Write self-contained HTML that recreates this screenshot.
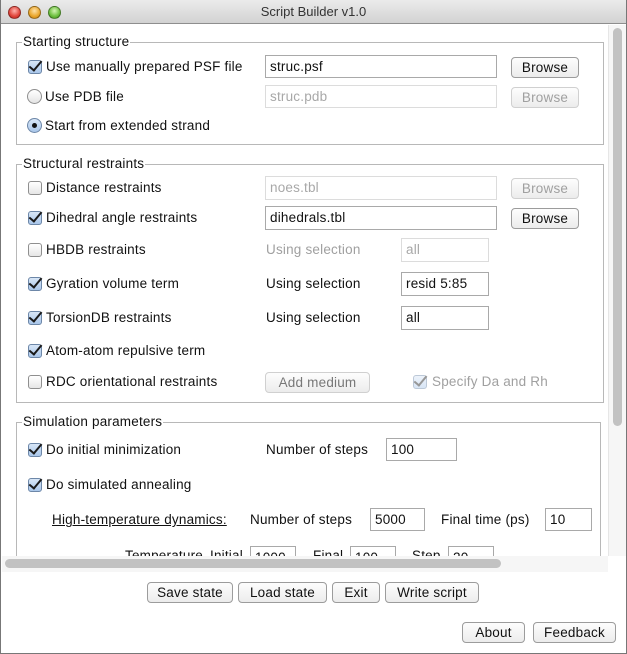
<!DOCTYPE html>
<html><head><meta charset="utf-8"><style>
*{box-sizing:border-box;margin:0;padding:0}
body{width:627px;height:654px;overflow:hidden;background:#fff;font-family:"Liberation Sans",sans-serif;font-size:13.5px;letter-spacing:.2px;color:#111;position:relative}
.a{position:absolute;white-space:nowrap}
.win{position:absolute;left:0;top:0;width:627px;height:654px;border:1px solid #777;border-top:none}
.title{position:absolute;left:0;top:0;width:627px;height:24px;background:linear-gradient(#ebebeb,#d2d2d2);border-bottom:1px solid #8e8e8e;text-align:center;line-height:24px;font-size:13px;letter-spacing:0;color:#333}
.dot{position:absolute;top:6px;width:13px;height:13px;border-radius:50%;border:1px solid rgba(0,0,0,.35)}
.grp{position:absolute;border:1px solid #b8b8b8}
.gt{position:absolute;background:#fff;padding:0 1px;line-height:14px}
.cb{position:absolute;width:14px;height:14px;border:1px solid #8f8f8f;border-radius:3px;background:linear-gradient(#fff,#e6e6e6)}
.cb.on{background:linear-gradient(#d8e6f7,#a9c6ea);border-color:#6d87a8}
.cb.on::after{content:"";position:absolute;left:3px;top:-3px;width:5px;height:11px;border-right:2.5px solid #1a1a1a;border-bottom:2.5px solid #1a1a1a;transform:rotate(40deg)}
.cb.dis{opacity:.45}
.rb{position:absolute;width:15px;height:15px;border:1px solid #8f8f8f;border-radius:50%;background:linear-gradient(#fff,#e4e4e4)}
.rb.on{background:linear-gradient(#d8e6f7,#a9c6ea);border-color:#6d87a8}
.rb.on::after{content:"";position:absolute;left:4px;top:4px;width:5px;height:5px;border-radius:50%;background:#111}
.in{position:absolute;border:1px solid #a9a9a9;background:#fff;padding-left:4px;line-height:21px}
.in.dis{border-color:#dcdcdc;color:#a8a8a8}
.bt{position:absolute;border:1px solid #9c9c9c;border-radius:4px;background:linear-gradient(#fdfdfd,#ececec);text-align:center;line-height:19px}
.bt.dis{border-color:#d0d0d0;color:#a0a0a0}
.g{color:#a0a0a0}
</style></head><body>
<div class="title">Script Builder v1.0</div>
<div class="dot" style="left:8px;background:radial-gradient(circle at 50% 35%,#ffb3ad,#e0443a 60%,#b7261d)"></div>
<div class="dot" style="left:28px;background:radial-gradient(circle at 50% 35%,#ffe1a6,#eaa62b 60%,#c27c10)"></div>
<div class="dot" style="left:48px;background:radial-gradient(circle at 50% 35%,#d4f5b4,#6cbf3e 60%,#3f8f1f)"></div>

<div class="grp" style="left:16px;top:42px;width:588px;height:103px"></div>
<div class="gt a" style="left:22px;top:35px">Starting structure</div>
<div class="cb on" style="left:28px;top:60px"></div><div class="a" style="left:46px;top:59px">Use manually prepared PSF file</div>
<div class="in" style="left:265px;top:55px;width:232px;height:23px">struc.psf</div>
<div class="bt" style="left:511px;top:57px;width:68px;height:21px">Browse</div>
<div class="rb" style="left:27px;top:89px"></div><div class="a" style="left:45px;top:89px">Use PDB file</div>
<div class="in dis" style="left:265px;top:85px;width:232px;height:23px">struc.pdb</div>
<div class="bt dis" style="left:511px;top:87px;width:68px;height:21px">Browse</div>
<div class="rb on" style="left:27px;top:118px"></div><div class="a" style="left:45px;top:118px">Start from extended strand</div>

<div class="grp" style="left:16px;top:164px;width:588px;height:239px"></div>
<div class="gt a" style="left:22px;top:157px">Structural restraints</div>
<div class="cb" style="left:28px;top:181px"></div><div class="a" style="left:46px;top:180px">Distance restraints</div>
<div class="in dis" style="left:265px;top:176px;width:232px;height:24px">noes.tbl</div>
<div class="bt dis" style="left:511px;top:178px;width:68px;height:21px">Browse</div>
<div class="cb on" style="left:28px;top:211px"></div><div class="a" style="left:46px;top:210px">Dihedral angle restraints</div>
<div class="in" style="left:265px;top:206px;width:232px;height:24px">dihedrals.tbl</div>
<div class="bt" style="left:511px;top:208px;width:68px;height:21px">Browse</div>
<div class="cb" style="left:28px;top:243px"></div><div class="a" style="left:46px;top:242px">HBDB restraints</div>
<div class="a g" style="left:266px;top:242px">Using selection</div>
<div class="in dis" style="left:401px;top:238px;width:88px;height:24px">all</div>
<div class="cb on" style="left:28px;top:277px"></div><div class="a" style="left:46px;top:276px">Gyration volume term</div>
<div class="a" style="left:266px;top:276px">Using selection</div>
<div class="in" style="left:401px;top:272px;width:88px;height:24px">resid 5:85</div>
<div class="cb on" style="left:28px;top:311px"></div><div class="a" style="left:46px;top:310px">TorsionDB restraints</div>
<div class="a" style="left:266px;top:310px">Using selection</div>
<div class="in" style="left:401px;top:306px;width:88px;height:24px">all</div>
<div class="cb on" style="left:28px;top:344px"></div><div class="a" style="left:46px;top:343px">Atom-atom repulsive term</div>
<div class="cb" style="left:28px;top:375px"></div><div class="a" style="left:46px;top:374px">RDC orientational restraints</div>
<div class="bt dis" style="left:265px;top:372px;width:105px;height:21px;color:#777">Add medium</div>
<div class="cb on dis" style="left:413px;top:375px"></div><div class="a g" style="left:432px;top:374px">Specify Da and Rh</div>

<div class="grp" style="left:16px;top:422px;width:585px;height:160px"></div>
<div class="gt a" style="left:22px;top:415px">Simulation parameters</div>
<div class="cb on" style="left:28px;top:443px"></div><div class="a" style="left:46px;top:442px">Do initial minimization</div>
<div class="a" style="left:266px;top:442px">Number of steps</div>
<div class="in" style="left:386px;top:438px;width:71px;height:23px">100</div>
<div class="cb on" style="left:28px;top:478px"></div><div class="a" style="left:46px;top:477px">Do simulated annealing</div>
<div class="a" style="left:52px;top:512px;text-decoration:underline">High-temperature dynamics:</div>
<div class="a" style="left:250px;top:512px">Number of steps</div>
<div class="in" style="left:370px;top:508px;width:55px;height:23px">5000</div>
<div class="a" style="left:441px;top:512px">Final time (ps)</div>
<div class="in" style="left:545px;top:508px;width:47px;height:23px">10</div>
<div class="a" style="left:125px;top:548px">Temperature</div>
<div class="a" style="left:210px;top:548px">Initial</div>
<div class="in" style="left:250px;top:546px;width:46px;height:23px">1000</div>
<div class="a" style="left:313px;top:548px">Final</div>
<div class="in" style="left:350px;top:546px;width:46px;height:23px">100</div>
<div class="a" style="left:412px;top:548px">Step</div>
<div class="in" style="left:448px;top:546px;width:46px;height:23px">20</div>

<div class="a" style="left:0;top:556px;width:627px;height:98px;background:#fff"></div>
<div class="a" style="left:2px;top:556px;width:606px;height:16px;background:#f6f6f6"></div>
<div class="a" style="left:5px;top:559px;width:496px;height:9px;border-radius:5px;background:#c2c2c2"></div>
<div class="a" style="left:608px;top:25px;width:18px;height:531px;background:#f6f6f6;border-left:1px solid #e6e6e6"></div>
<div class="a" style="left:613px;top:28px;width:9px;height:398px;border-radius:5px;background:#c2c2c2"></div>

<div class="bt" style="left:147px;top:582px;width:86px;height:21px">Save state</div>
<div class="bt" style="left:238px;top:582px;width:89px;height:21px">Load state</div>
<div class="bt" style="left:332px;top:582px;width:48px;height:21px">Exit</div>
<div class="bt" style="left:385px;top:582px;width:94px;height:21px">Write script</div>
<div class="bt" style="left:462px;top:622px;width:63px;height:21px">About</div>
<div class="bt" style="left:533px;top:622px;width:83px;height:21px">Feedback</div>
<div class="win"></div>
</body></html>
